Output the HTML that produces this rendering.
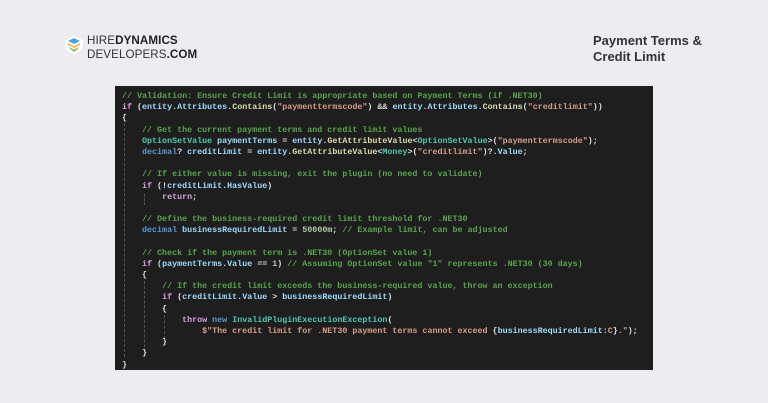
<!DOCTYPE html>
<html><head><meta charset="utf-8"><style>
*{margin:0;padding:0;box-sizing:border-box}
body{width:768px;height:403px;background:#ededf1;position:relative;overflow:hidden;font-family:"Liberation Sans",sans-serif}
.logo{position:absolute;left:64px;top:35px}
.lt{position:absolute;left:87px;top:34px;font-size:11.6px;line-height:13.5px;color:#333;letter-spacing:0.1px}
.lt b{font-weight:700;color:#222}
.title{position:absolute;left:593px;top:33px;font-size:13px;line-height:16px;color:#333;font-weight:600}
.code{position:absolute;left:115px;top:86px;width:538px;height:284px;background:#1e1e1e}
.pre{position:absolute;left:122px;top:91px;font-family:"Liberation Mono",monospace;font-size:8.35px;color:#dcdcdc;font-weight:bold}
.pre div{white-space:pre;height:11.2px;line-height:11.2px;overflow:visible}
.c{color:#57a64a}.k{color:#569cd6}.p{color:#d8a0df}.t{color:#4ec9b0}.s{color:#d69d85}.v{color:#9cdcfe}.m{color:#dcdcaa}.n{color:#b5cea8}
.g{position:absolute;border-left:1px dashed #555;width:0}
</style></head><body>
<svg class="logo" width="20" height="20" viewBox="0 0 20 20">
<path d="M10 1 L19 5 L19 10 Q19 16 10 19 Q1 16 1 10 L1 5Z" fill="#fff"/>
<path d="M10 3 L16 6 L10 9 L4 6Z" fill="#4aa3df"/>
<path d="M4 8 L10 11 L16 8 L16 10 L10 13 L4 10Z" fill="#f2b84b"/>
<path d="M5 12 L10 14.5 L15 12 L14 14 L10 17 L6 14Z" fill="#8cc152"/>
</svg>
<div class="lt">HIRE<b>DYNAMICS</b><br>DEVELOPERS<b>.COM</b></div>
<div class="title">Payment Terms &amp;<br>Credit Limit</div>
<div class="code"></div>
<div class="g" style="left:124px;top:123px;height:234px"></div>
<div class="g" style="left:144px;top:194px;height:11px"></div>
<div class="g" style="left:144px;top:281px;height:76px"></div>
<div class="g" style="left:164px;top:315px;height:24px"></div>
<div class="pre">
<div><span class="c">// Validation: Ensure Credit Limit is appropriate based on Payment Terms (if .NET30)</span></div>
<div><span class="p">if</span> (<span class="v">entity</span>.<span class="v">Attributes</span>.<span class="m">Contains</span>(<span class="s">"paymenttermscode"</span>) &amp;&amp; <span class="v">entity</span>.<span class="v">Attributes</span>.<span class="m">Contains</span>(<span class="s">"creditlimit"</span>))</div>
<div>{</div>
<div>    <span class="c">// Get the current payment terms and credit limit values</span></div>
<div>    <span class="t">OptionSetValue</span> <span class="v">paymentTerms</span> = <span class="v">entity</span>.<span class="m">GetAttributeValue</span>&lt;<span class="t">OptionSetValue</span>&gt;(<span class="s">"paymenttermscode"</span>);</div>
<div>    <span class="k">decimal</span>? <span class="v">creditLimit</span> = <span class="v">entity</span>.<span class="m">GetAttributeValue</span>&lt;<span class="t">Money</span>&gt;(<span class="s">"creditlimit"</span>)?.<span class="v">Value</span>;</div>
<div> </div>
<div>    <span class="c">// If either value is missing, exit the plugin (no need to validate)</span></div>
<div>    <span class="p">if</span> (!<span class="v">creditLimit</span>.<span class="v">HasValue</span>)</div>
<div>        <span class="p">return</span>;</div>
<div> </div>
<div>    <span class="c">// Define the business-required credit limit threshold for .NET30</span></div>
<div>    <span class="k">decimal</span> <span class="v">businessRequiredLimit</span> = <span class="n">50000m</span>; <span class="c">// Example limit, can be adjusted</span></div>
<div> </div>
<div>    <span class="c">// Check if the payment term is .NET30 (OptionSet value 1)</span></div>
<div>    <span class="p">if</span> (<span class="v">paymentTerms</span>.<span class="v">Value</span> == <span class="n">1</span>) <span class="c">// Assuming OptionSet value "1" represents .NET30 (30 days)</span></div>
<div>    {</div>
<div>        <span class="c">// If the credit limit exceeds the business-required value, throw an exception</span></div>
<div>        <span class="p">if</span> (<span class="v">creditLimit</span>.<span class="v">Value</span> &gt; <span class="v">businessRequiredLimit</span>)</div>
<div>        {</div>
<div>            <span class="p">throw</span> <span class="k">new</span> <span class="t">InvalidPluginExecutionException</span>(</div>
<div>                <span class="s">$"The credit limit for .NET30 payment terms cannot exceed </span>{<span class="v">businessRequiredLimit</span>:<span class="s">C</span>}<span class="s">."</span>);</div>
<div>        }</div>
<div>    }</div>
<div>}</div>
</div>
</body></html>
